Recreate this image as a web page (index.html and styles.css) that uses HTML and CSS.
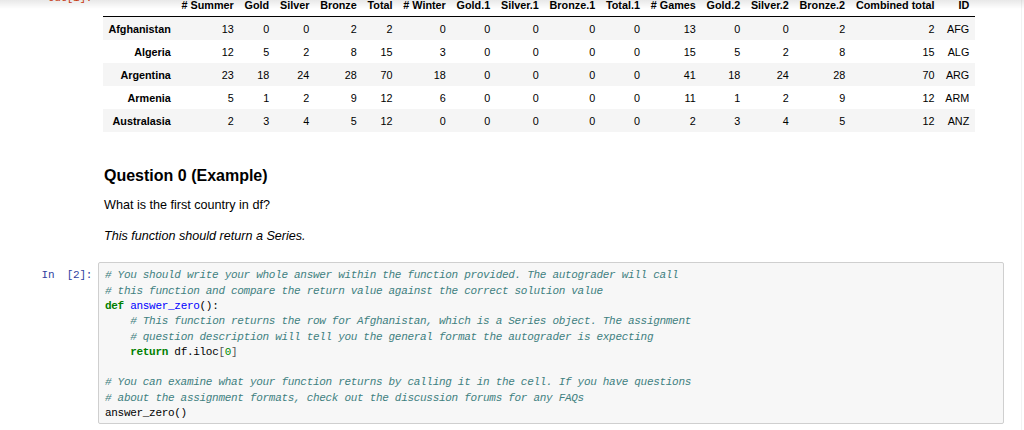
FILE: index.html
```html
<!DOCTYPE html>
<html>
<head>
<meta charset="utf-8">
<link rel="stylesheet" href="styles.css">
</head>
<body>
<div class="notebook">
  <div class="cell out-cell">
    <div class="prompt out-prompt">Out[1]:</div>
    <div class="area">
      <table class="df">
        <thead>
          <tr><th></th><th># Summer</th><th>Gold</th><th>Silver</th><th>Bronze</th><th>Total</th><th># Winter</th><th>Gold.1</th><th>Silver.1</th><th>Bronze.1</th><th>Total.1</th><th># Games</th><th>Gold.2</th><th>Silver.2</th><th>Bronze.2</th><th>Combined total</th><th>ID</th></tr>
        </thead>
        <tbody>
          <tr><th>Afghanistan</th><td>13</td><td>0</td><td>0</td><td>2</td><td>2</td><td>0</td><td>0</td><td>0</td><td>0</td><td>0</td><td>13</td><td>0</td><td>0</td><td>2</td><td>2</td><td>AFG</td></tr>
          <tr><th>Algeria</th><td>12</td><td>5</td><td>2</td><td>8</td><td>15</td><td>3</td><td>0</td><td>0</td><td>0</td><td>0</td><td>15</td><td>5</td><td>2</td><td>8</td><td>15</td><td>ALG</td></tr>
          <tr><th>Argentina</th><td>23</td><td>18</td><td>24</td><td>28</td><td>70</td><td>18</td><td>0</td><td>0</td><td>0</td><td>0</td><td>41</td><td>18</td><td>24</td><td>28</td><td>70</td><td>ARG</td></tr>
          <tr><th>Armenia</th><td>5</td><td>1</td><td>2</td><td>9</td><td>12</td><td>6</td><td>0</td><td>0</td><td>0</td><td>0</td><td>11</td><td>1</td><td>2</td><td>9</td><td>12</td><td>ARM</td></tr>
          <tr><th>Australasia</th><td>2</td><td>3</td><td>4</td><td>5</td><td>12</td><td>0</td><td>0</td><td>0</td><td>0</td><td>0</td><td>2</td><td>3</td><td>4</td><td>5</td><td>12</td><td>ANZ</td></tr>
        </tbody>
      </table>
    </div>
  </div>

  <div class="cell md-cell">
    <div class="prompt"></div>
    <div class="area md">
      <h3>Question 0 (Example)</h3>
      <p>What is the first country in df?</p>
      <p><em>This function should return a Series.</em></p>
    </div>
  </div>

  <div class="cell code-cell">
    <div class="prompt in-prompt">In&nbsp; [2]:</div>
    <div class="area">
<pre class="code"><span class="c"># You should write your whole answer within the function provided. The autograder will call</span>
<span class="c"># this function and compare the return value against the correct solution value</span>
<span class="k">def</span> <span class="f">answer_zero</span>():
    <span class="c"># This function returns the row for Afghanistan, which is a Series object. The assignment</span>
    <span class="c"># question description will tell you the general format the autograder is expecting</span>
    <span class="k">return</span> df.iloc<span class="b">[</span><span class="n">0</span><span class="b">]</span>

<span class="c"># You can examine what your function returns by calling it in the cell. If you have questions</span>
<span class="c"># about the assignment formats, check out the discussion forums for any FAQs</span>
answer_zero()</pre>
    </div>
  </div>
</div>
<div class="topshade"></div>
</body>
</html>
```

FILE: styles.css
```css
html, body {
  margin: 0;
  padding: 0;
  background: #ffffff;
}

body {
  font-family: "Liberation Sans", Arial, sans-serif;
  color: #000;
  overflow: hidden;
  height: 430px;
}

.notebook {
  margin-top: -9px;
  margin-right: 2px;
  padding-right: 17px;
  border-right: 1px solid rgba(0, 0, 0, 0.05);
  min-height: 450px;
}

.cell {
  display: flex;
  align-items: flex-start;
  gap: 6px;
}

.prompt {
  flex: 0 0 92px;
  text-align: right;
  font-family: "Liberation Mono", monospace;
  font-size: 11px;
  letter-spacing: -0.3px;
  line-height: 15.3px;
  white-space: pre;
}

.out-prompt {
  color: #D84315;
}

.in-prompt {
  color: #303F9F;
  padding-top: 5.5px;
}

.area {
  flex: 1 1 auto;
  min-width: 0;
}

/* dataframe table */
.df {
  border-collapse: collapse;
  border: none;
  margin: 2.4px 0 0 5px;
  font-size: 10.8px;
  line-height: 12.2px;
}

.df th,
.df td {
  padding: 5.4px;
  text-align: right;
  vertical-align: middle;
  white-space: nowrap;
}

.df thead th {
  font-weight: bold;
  border-bottom: 1px solid #000;
}

.df tbody th {
  font-weight: bold;
}

.df tbody tr:nth-child(odd) {
  background: #f5f5f5;
}

/* markdown */
.md {
  padding-left: 6px;
  margin-top: 34px;
}

.md h3 {
  font-size: 16px;
  font-weight: bold;
  line-height: 20px;
  margin: 0 0 10px 0;
}

.md p {
  font-size: 12.6px;
  line-height: 18px;
  margin: 0 0 12.7px 0;
}

.code-cell {
  margin-top: 4.7px;
}

/* code */
.code {
  margin: 0;
  padding: 5px 6px 2px 6px;
  background: #f7f7f7;
  border: 1px solid #cfcfcf;
  border-radius: 2px;
  font-family: "Liberation Mono", monospace;
  font-size: 11px;
  letter-spacing: -0.3px;
  line-height: 15.3px;
  color: #000;
  white-space: pre;
}

.code .c {
  color: #408080;
  font-style: italic;
}

.code .k {
  color: #008000;
  font-weight: bold;
}

.code .f {
  color: #0000ff;
}

.code .n {
  color: #008800;
}

.code .b {
  color: #555;
}

.topshade {
  position: absolute;
  top: 0;
  left: 0;
  right: 0;
  height: 9px;
  background: linear-gradient(to bottom, rgba(0, 0, 0, 0.09), rgba(0, 0, 0, 0));
  pointer-events: none;
}
```
